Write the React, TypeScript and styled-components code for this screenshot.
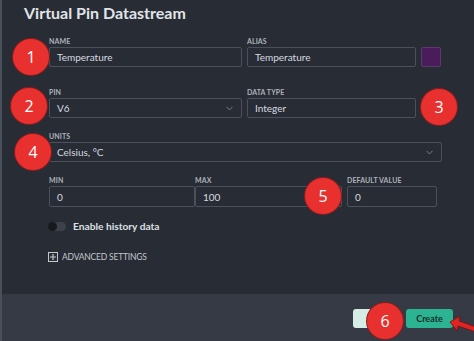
import React from "react";
import styled, { createGlobalStyle } from "styled-components";

const Global = createGlobalStyle`
  html, body { margin: 0; padding: 0; background: #282c35; }
  * { box-sizing: border-box; }
`;

const Root = styled.div`
  position: relative;
  width: 474px;
  height: 341px;
  overflow: hidden;
  display: flex;
  flex-direction: column;
  background: #282c35;
  border-left: 2px solid #4a505b;
  font-family: Lato, "Open Sans", sans-serif;
`;

const Main = styled.div`
  flex: 1;
  padding: 2px 32px 0 22px;
  display: flex;
  flex-direction: column;
`;

const Title = styled.h1`
  margin: 0 0 12px 0;
  font-size: 16px;
  line-height: 22px;
  font-weight: 700;
  color: #e1e4e8;
`;

const Form = styled.div`
  padding-left: 25px;
  display: flex;
  flex-direction: column;
`;

const Row = styled.div<{ $cols: string; $gap?: number; $mt?: number }>`
  display: grid;
  grid-template-columns: ${(p) => p.$cols};
  column-gap: ${(p) => p.$gap ?? 5}px;
  margin-top: ${(p) => p.$mt ?? 0}px;
  align-items: end;
`;

const Field = styled.div<{ $ml?: number }>`
  display: flex;
  flex-direction: column;
  min-width: 0;
  margin-left: ${(p) => p.$ml ?? 0}px;
`;

const Label = styled.div`
  font-size: 7px;
  line-height: 10px;
  font-weight: 700;
  color: #aeb3bb;
  letter-spacing: 0.1px;
  text-transform: uppercase;
  margin-bottom: 1px;
`;

const Input = styled.div<{ $h?: number }>`
  height: ${(p) => p.$h ?? 20}px;
  border: 1px solid #4b515c;
  border-radius: 2px;
  background: #282c35;
  display: flex;
  align-items: center;
  justify-content: space-between;
  padding: 0 8px 0 7px;
  font-size: 10px;
  color: #d6dae0;
`;

const Swatch = styled.div`
  width: 20px;
  height: 20px;
  border-radius: 2px;
  background: #4a1c5b;
  border: 1px solid #5e3a6c;
`;

const Chevron = () => (
  <svg width="7" height="5" viewBox="0 0 7 5">
    <path d="M0.5 0.8 L3.5 4 L6.5 0.8" fill="none" stroke="#7d838d" strokeWidth="0.9" />
  </svg>
);

const ToggleRow = styled.div`
  display: flex;
  align-items: center;
  gap: 7px;
  height: 12px;
  margin-top: 13px;
  margin-left: -1px;
`;

const Toggle = styled.div`
  width: 18px;
  height: 9px;
  border-radius: 5px;
  background: #3c414a;
  display: flex;
  align-items: center;
`;

const Knob = styled.div`
  width: 9px;
  height: 9px;
  border-radius: 50%;
  background: #17191d;
`;

const ToggleText = styled.span`
  font-size: 10.2px;
  font-weight: 700;
  color: #dde0e4;
`;

const AdvRow = styled.div`
  display: flex;
  align-items: center;
  gap: 4px;
  height: 12px;
  margin-top: 19px;
  margin-left: -1px;
`;

const AdvText = styled.span`
  font-size: 8.5px;
  color: #c3c7cd;
  letter-spacing: -0.2px;
`;

const Footer = styled.div`
  height: 47px;
  background: #353a44;
  display: flex;
  justify-content: flex-end;
  align-items: flex-start;
  gap: 6px;
  padding: 15px 21px 0 0;
`;

const Btn = styled.div<{ $primary?: boolean }>`
  width: 47px;
  height: 19px;
  border-radius: 3px;
  display: flex;
  align-items: center;
  justify-content: center;
  font-size: 9px;
  font-weight: 700;
  background: ${(p) => (p.$primary ? "#2cb392" : "#d6ede6")};
  color: ${(p) => (p.$primary ? "#13302a" : "#d6ede6")};
`;

const Badge = styled.div<{ $x: number; $y: number; $d?: number }>`
  position: absolute;
  left: ${(p) => p.$x - (p.$d ?? 36) / 2}px;
  top: ${(p) => p.$y - (p.$d ?? 36) / 2}px;
  width: ${(p) => p.$d ?? 36}px;
  height: ${(p) => p.$d ?? 36}px;
  border-radius: 50%;
  background: #e8302f;
  box-shadow: 0 0 0 1px #8a1d1d;
  color: #ffffff;
  font-family: "Open Sans", "Liberation Sans", sans-serif;
  font-size: 16px;
  display: flex;
  align-items: center;
  justify-content: center;
`;

const Arrow = styled.svg`
  position: absolute;
  left: 446px;
  top: 314px;
`;

export default function App() {
  return (
    <>
      <Global />
      <Root>
        <Main>
          <Title>Virtual Pin Datastream</Title>
          <Form>
            <Row $cols="193px 169px 20px">
              <Field>
                <Label>Name</Label>
                <Input>Temperature</Input>
              </Field>
              <Field>
                <Label>Alias</Label>
                <Input>Temperature</Input>
              </Field>
              <Swatch />
            </Row>
            <Row $cols="193px 169px" $mt={20}>
              <Field>
                <Label>Pin</Label>
                <Input>
                  V6
                  <Chevron />
                </Input>
              </Field>
              <Field>
                <Label>Data Type</Label>
                <Input>Integer</Input>
              </Field>
            </Row>
            <Row $cols="393px" $mt={13}>
              <Field>
                <Label>Units</Label>
                <Input>
                  Celsius, °C
                  <Chevron />
                </Input>
              </Field>
            </Row>
            <Row $cols="146px 147px 95px" $gap={0} $mt={13}>
              <Field>
                <Label>Min</Label>
                <Input $h={21}>0</Input>
              </Field>
              <Field>
                <Label>Max</Label>
                <Input $h={21}>100</Input>
              </Field>
              <Field $ml={5}>
                <Label>Default Value</Label>
                <Input $h={21}>0</Input>
              </Field>
            </Row>
            <ToggleRow>
              <Toggle>
                <Knob />
              </Toggle>
              <ToggleText>Enable history data</ToggleText>
            </ToggleRow>
            <AdvRow>
              <svg width="10" height="10" viewBox="0 0 10 10">
                <rect x="0.5" y="0.5" width="9" height="9" fill="#2b2f38" stroke="#c3c7cd" strokeWidth="1" />
                <path d="M5 2 V8 M2 5 H8" stroke="#c3c7cd" strokeWidth="1.2" />
              </svg>
              <AdvText>ADVANCED SETTINGS</AdvText>
            </AdvRow>
          </Form>
        </Main>
        <Footer>
          <Btn />
          <Btn $primary>Create</Btn>
        </Footer>
        <Badge $x={29} $y={57}>1</Badge>
        <Badge $x={27} $y={106}>2</Badge>
        <Badge $x={437} $y={107}>3</Badge>
        <Badge $x={31} $y={152}>4</Badge>
        <Badge $x={321} $y={196}>5</Badge>
        <Badge $x={383} $y={321}>6</Badge>
        <Arrow width="28" height="22" viewBox="0 0 28 22">
          <path
            d="M2 8 L12 2 L11 7 L28 13 L28 18 L10 12 L9 17 Z"
            fill="#e02424"
            stroke="#7a1010"
            strokeWidth="0.8"
          />
        </Arrow>
      </Root>
    </>
  );
}
